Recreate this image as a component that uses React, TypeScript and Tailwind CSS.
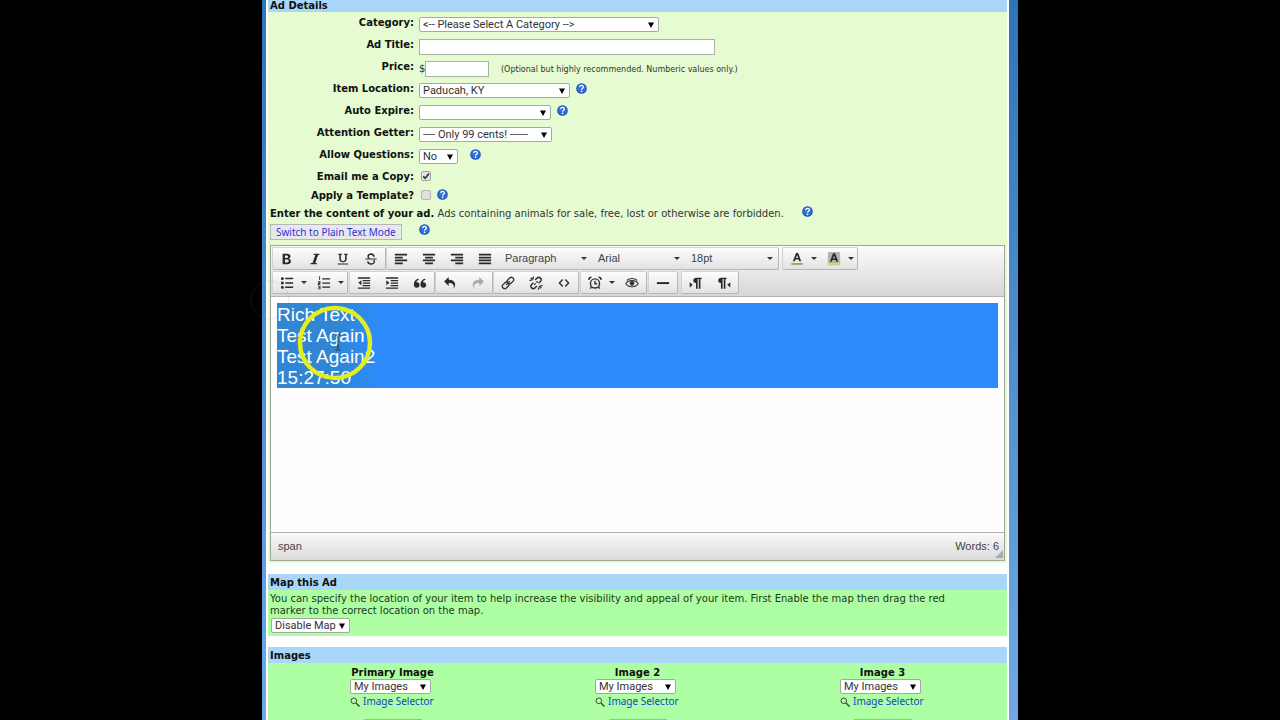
import React from "react";

const ui = "font-['Liberation_Sans',Arial,sans-serif]";

function Drop({ id, label, value, size }: { id: string; label: string; value: string; size: string }) {
  return (
    <span className={`grid h-[15px] shrink-0 items-center ${size}`}>
      <select
        id={id}
        aria-label={label}
        defaultValue={value}
        className="col-start-1 row-start-1 h-[15px] w-full appearance-none rounded-xs border border-[#a3ab9f] bg-white pl-[3px] font-[Roboto,Arial,sans-serif] text-[11px] leading-[13px] text-[#333]"
      >
        <option value={value}>{value}</option>
      </select>
      <svg viewBox="0 0 6 6" className="pointer-events-none col-start-1 row-start-1 mr-[5px] h-[6px] w-[6px] justify-self-end fill-black">
        <path d="M0 .5h6L3 6z" />
      </svg>
    </span>
  );
}

function Help({ label }: { label: string }) {
  return (
    <button type="button" aria-label={label} className="h-[11px] w-[11px] shrink-0">
      <svg viewBox="0 0 12 12" className="h-[11px] w-[11px]">
        <circle cx="6" cy="6" r="5.8" fill="#1d52b4" />
        <circle cx="6" cy="5.6" r="4.9" fill="#2f6fd6" />
        <path d="M4.1 4.5C4.1 2 8 2.100 8 4.300 8 5.700 6.100 5.600 6.100 7.300" fill="none" stroke="#fff" strokeWidth="1.4" />
        <circle cx="6.100" cy="9.200" r=".9" fill="#fff" />
      </svg>
    </button>
  );
}

function Row({ id, label, children, short = false }: { id: string; label: string; children: React.ReactNode; short?: boolean }) {
  return (
    <div className={`flex items-start ${short ? "h-[19px]" : "h-[22px]"}`}>
      <label htmlFor={id} className="w-[146px] shrink-0 pt-[3px] text-right font-bold leading-[13px]">
        {label}
      </label>
      <div className={`flex items-start pl-[5px] ${short ? "pt-[3px]" : "pt-1"}`}>{children}</div>
    </div>
  );
}

const icons: Record<string, React.ReactNode> = {
  bold: <path fillRule="evenodd" d="M3 2h5.500c4 0 4.500 4.500 1.600 5.700 3.700 1 3 6.300-1.300 6.300H3zm2.700 2v2.800h2c2 0 2-2.800 0-2.800zm0 4.700V12h2.400c2.500 0 2.500-3.300 0-3.300z" />,
  italic: <path d="M6.500 2h6.500v1.300h-1.500L8.300 12.700H10V14H3v-1.300h2.200L8.400 3.300H6.500z" />,
  underline: <path d="M2.500 2H7v1H5.600v5c0 3.200 4.800 3.200 4.800 0V3H9V2h4.500v1h-1.300v5.300c0 4.500-8.400 4.500-8.400 0V3H2.500zM2 13h12v1.400H2z" />,
  strike: <path d="M1.500 7.500h13v1.200h-13zM12.300 5.500h-1.700C10.300 2.500 5.500 2.800 5.500 5c0 1 .8 1.600 2 2H4.600C2.300 3.500 6 1.500 8 1.500c2.500 0 4.300 1.500 4.300 4zM3.500 10.500h1.700c.3 3.300 5.800 2.800 5.800.6 0-.8-.4-1.300-1-1.700h2.400c1.200 3-1.600 5.100-4.200 5.100-3 0-4.700-1.600-4.700-4z" />,
  left: <path d="M1 2h14v2H1zM1 5.300h9v2H1zM1 8.600h14v2H1zM1 11.900h9v2H1z" />,
  center: <path d="M1 2h14v2H1zM3.500 5.300h9v2h-9zM1 8.600h14v2H1zM3.500 11.900h9v2h-9z" />,
  right: <path d="M1 2h14v2H1zM6 5.300h9v2H6zM1 8.600h14v2H1zM6 11.900h9v2H6z" />,
  justify: <path d="M1 2h14v2H1zM1 5.300h14v2H1zM1 8.600h14v2H1zM1 11.900h14v2H1z" />,
  bullets: <path d="M6 2h9v1.800H6zM6 7h9v1.800H6zM6 12h9v1.800H6zM1 3a1.700 1.700 0 1 0 3.400 0A1.700 1.700 0 1 0 1 3zM1 8a1.700 1.700 0 1 0 3.400 0A1.700 1.700 0 1 0 1 8zM1 13a1.700 1.700 0 1 0 3.400 0A1.700 1.700 0 1 0 1 13z" />,
  numbers: <path d="M6 2.500h9V4H6zM6 7.300h9v1.500H6zM6 12h9v1.500H6zM2 .5h1.500v4h-1V1.500H2zM1 6h3v2.300l-1.800 1H4v1H1V8.200l1.800-1H1zM1 11.200h3v4H1v-1h2v-.7H1.500v-.8H3V12H1z" />,
  outdent: <path d="M1 1.500h14V3H1zM6.500 4.500H15V6H6.500zM6.500 7.300H15v1.500H6.500zM6.500 10.200H15v1.500H6.500zM1 13h14v1.500H1zM5 4.800v5.800L1.500 7.700z" />,
  indent: <path d="M1 1.500h14V3H1zM6.500 4.500H15V6H6.500zM6.500 7.300H15v1.500H6.500zM6.500 10.200H15v1.500H6.500zM1 13h14v1.500H1zM1.500 4.800v5.800L5 7.700z" />,
  quote: <path d="M4.500 7a3.200 3.200 0 1 1-3.400 3.500C.7 6 3.300 3.300 6.500 3v1.600C5 5 4 5.900 3.800 7zM12 7a3.200 3.200 0 1 1-3.400 3.500C8.200 6 10.800 3.300 14 3v1.600c-1.500.4-2.500 1.300-2.700 2.400z" />,
  undo: <path d="M6.500 1v3.200c7-.2 9.500 5.300 5.500 10.300C13.200 10.800 12 7.800 6.500 8v3.500L1.200 6.200z" />,
  redo: <path d="M9.500 1v3.200c-7-.2-9.500 5.300-5.500 10.300C2.800 10.800 4 7.800 9.500 8v3.500l5.300-5.300z" fill="#aaa" />,
  link: (
    <g fill="none" stroke="#333" strokeWidth="1.500" transform="rotate(-45 8 8)">
      <rect x="0" y="5.300" width="8.500" height="5.400" rx="2.700" />
      <rect x="7.500" y="5.300" width="8.500" height="5.400" rx="2.700" />
      <path d="M5 8h6" />
    </g>
  ),
  unlink: (
    <g fill="none" stroke="#333" strokeWidth="1.700">
      <path d="M7 4.500l2-2c3-2.500 6.500 1 4 3.800l-2 2M9 11.500l-2 2c-3 2.500-6.500-1-4-3.800l2-2M6 10l1.500-1.500M8.500 7.500L10 6M2 2l2.500 2.500M5 .5V3M.5 5H3M14 14l-2.500-2.500M11 15.500V13M15.500 11H13" />
    </g>
  ),
  code: <path d="M6.500 4L2.800 8l3.700 4M9.500 4l3.700 4-3.700 4" fill="none" stroke="#333" strokeWidth="1.700" />,
  clock: (
    <g fill="none" stroke="#333" strokeWidth="1.600">
      <circle cx="8" cy="8.500" r="5.200" />
      <path d="M8 5.500v3.300h2.500M1 4.500c0-2 1-3 3-3M15 4.500c0-2-1-3-3-3M4 12.500l-1.500 2M12 12.500l1.500 2" />
    </g>
  ),
  eye: (
    <g fill="none" stroke="#333" strokeWidth="1.200">
      <path d="M.8 8.500C4 4 12 4 15.200 8.500 12 13.500 4 13.500 .8 8.500zM2 5c3.500-3 8.500-3 12 0" />
      <circle cx="8" cy="8.300" r="2.100" fill="#333" />
    </g>
  ),
  rule: <path d="M1 7h14v2.200H1z" />,
  ltr: <path d="M14.500 2H8.300C3.800 2 3.800 8 8 8v6.500h1.900v-11h1.300v11h1.900v-11h1.400zM.8 7v6l3.500-3z" />,
  rtl: <path d="M11 2H4.800C.3 2 .3 8 4.500 8v6.500h1.900v-11h1.300v11h1.900v-11H11zM15.200 7v6l-3.500-3z" />,
  color: (
    <>
      <path fillRule="evenodd" d="M6.900 1h2.400l3.500 9.500h-2.200l-.7-2H6.200l-.7 2H3.300zm1.200 2.500L6.800 6.800h2.500z" />
      <path d="M1.500 12.800h13v1.700h-13z" fill="#8a9440" />
    </>
  ),
  back: (
    <>
      <path d="M1 0h14v13H1z" fill="#b3b6b3" />
      <path fillRule="evenodd" d="M6.900 1.500h2.400l3.500 9.500h-2.200l-.7-2H6.200l-.7 2H3.300zM8.100 4L6.800 7.300h2.500z" />
      <path d="M1 13h14v2.300H1z" fill="#d2d65c" />
    </>
  ),
};

function Caret() {
  return (
    <svg viewBox="0 0 6 3" className="h-[3px] w-[6px] shrink-0 fill-[#333]">
      <path d="M0 0h6L3 3z" />
    </svg>
  );
}

function Tool({ icon, name, menu = false }: { icon: string; name: string; menu?: boolean }) {
  return (
    <button type="button" aria-label={name} className={`flex h-[21px] items-center ${menu ? "w-[37px] justify-between pl-[7px] pr-[3px]" : "w-[28px] justify-center"}`}>
      <svg viewBox="0 0 16 16" className="h-[14px] w-[14px] fill-[#2a2a2a]">
        {icons[icon]}
      </svg>
      {menu && <Caret />}
    </button>
  );
}

function ListTool({ text }: { text: string }) {
  return (
    <button type="button" className="flex h-[21px] w-[93px] items-center justify-between pl-[6px] pr-[5px] text-[11px] text-[#444]">
      {text}
      <Caret />
    </button>
  );
}

const spaces = { none: "", near: "ml-px", wide: "ml-[3px]" };

function Group({ children, space = "none" }: { children: React.ReactNode; space?: keyof typeof spaces }) {
  return (
    <div className={`flex rounded-xs border border-[#d2d2d2] border-r-[#b8b8b8] border-b-[#b5b5b5] bg-linear-to-b from-[#fdfdfd] to-[#e2e2e2] ${spaces[space]}`}>
      {children}
    </div>
  );
}

function Heading({ children, slim = false }: { children: React.ReactNode; slim?: boolean }) {
  return <h2 className={`bg-[#a9d6f9] pl-[2px] font-bold ${slim ? "h-[12px] leading-[12px]" : "h-[16px] leading-[17px]"}`}>{children}</h2>;
}

function ImagePicker({ title, id }: { title: string; id: string }) {
  return (
    <div className="flex flex-1 flex-col items-center pt-[3px]">
      <label htmlFor={id} className="font-bold leading-[13px]">
        {title}
      </label>
      <div className="flex w-[85px] flex-col">
        <Drop id={id} label={title} value="My Images" size="w-[81px]" />
        <a href="#selector" className="flex items-center gap-[3px] whitespace-nowrap font-['Noto_Sans',sans-serif] text-[10px] leading-[15px] text-[#0a48c8]">
          <svg viewBox="0 0 10 10" className="h-[10px] w-[10px] shrink-0" fill="none" stroke="#444">
            <circle cx="3.800" cy="3.800" r="2.800" />
            <path d="M6 6l3.500 3.500" strokeWidth="1.500" />
          </svg>
          Image Selector
        </a>
        <button type="button" aria-label={`Upload ${title}`} className="mt-[10px] ml-[14px] h-[18px] w-[58px] border border-[#a9b5a9] bg-[#dedede]" />
      </div>
    </div>
  );
}

export default function App() {
  return (
    <div className="flex h-screen justify-center overflow-hidden bg-black font-['DejaVu_Sans',Verdana,sans-serif] text-[10px] text-[#111]">
      <div className="h-full w-[59.0625%] bg-linear-to-b from-[#2b76b8] to-[#70a8e6] pl-1 pr-[9px]">
        <main className="h-full bg-white px-[2px]">
          <form className="bg-[#e6fbd2] pb-[2px]" onSubmit={(e) => e.preventDefault()}>
            <Heading slim>Ad Details</Heading>
            <div className="pt-px">
              <Row id="category" label="Category:">
                <Drop id="category" label="Category" value="<-- Please Select A Category -->" size="w-[240px]" />
              </Row>
              <Row id="title" label="Ad Title:">
                <input id="title" type="text" className="h-[16px] w-[296px] border border-[#a9b3a4] bg-white px-1" />
              </Row>
              <Row id="price" label="Price:">
                <span className="w-[6px] text-[10px] leading-[16px] text-[#333]">$</span>
                <input id="price" type="text" className="h-[16px] w-[64px] border border-[#a9b3a4] bg-white px-1" />
                <span className="pl-3 text-[8px] leading-[18px] text-[#333]">(Optional but highly recommended. Numberic values only.)</span>
              </Row>
              <Row id="location" label="Item Location:">
                <Drop id="location" label="Item location" value="Paducah, KY" size="mr-[6px] w-[151px]" />
                <Help label="Item location help" />
              </Row>
              <Row id="expire" label="Auto Expire:">
                <Drop id="expire" label="Auto expire" value="" size="mr-[6px] w-[132px]" />
                <Help label="Auto expire help" />
              </Row>
              <Row id="attention" label="Attention Getter:">
                <Drop id="attention" label="Attention getter" value="---- Only 99 cents! ------" size="w-[133px]" />
              </Row>
              <Row id="questions" label="Allow Questions:">
                <Drop id="questions" label="Allow questions" value="No" size="mr-[12px] w-[39px]" />
                <Help label="Allow questions help" />
              </Row>
              <Row id="copy" label="Email me a Copy:" short>
                <span className="grid h-[11px] w-[13px] place-items-center">
                  <input id="copy" type="checkbox" defaultChecked className="peer col-start-1 row-start-1 h-[10px] w-[10px] appearance-none rounded-xs border border-[#a0a5a0] bg-[#e6e6e6]" />
                  <svg viewBox="0 0 10 10" className="pointer-events-none invisible col-start-1 row-start-1 h-[10px] w-[10px] peer-checked:visible">
                    <path d="M2.200 5.300l2 2L8 2.500" fill="none" stroke="#333" strokeWidth="1.700" />
                  </svg>
                </span>
              </Row>
              <Row id="template" label="Apply a Template?" short>
                <span className="mr-[5px] grid h-[11px] w-[13px] place-items-center">
                  <input id="template" type="checkbox" className="h-[10px] w-[10px] appearance-none rounded-xs border border-[#b0b5b0] bg-[#dedfde]" />
                </span>
                <Help label="Template help" />
              </Row>
            </div>
            <p className="flex h-[19px] items-start gap-[18px] whitespace-nowrap pt-px pl-[2px] text-[#333]">
              <span className="leading-[16px]">
                <b className="text-[#111]">Enter the content of your ad.</b> Ads containing animals for sale, free, lost or otherwise are forbidden.
              </span>
              <Help label="Ad content help" />
            </p>
            <div className="flex h-[21px] items-start gap-[17px] pl-[2px]">
              <button type="button" className="h-[16px] whitespace-nowrap border border-[#b3b8c0] bg-[#e8e8ec] px-[5px] font-['Noto_Sans',sans-serif] text-[10px] leading-[14px] text-[#3030d8]">
                Switch to Plain Text Mode
              </button>
              <Help label="Plain text mode help" />
            </div>

            <section className={`mr-[2px] ml-[2px] border border-[#9fa39c] ${ui}`}>
              <div className="flex flex-col gap-px border-b border-[#b5b5b5] bg-linear-to-b from-[#fcfcfc] to-[#d6d6d6] pt-px pb-[2px] pl-px">
                <div className="flex">
                  <Group>
                    <Tool icon="bold" name="Bold" />
                    <Tool icon="italic" name="Italic" />
                    <Tool icon="underline" name="Underline" />
                    <Tool icon="strike" name="Strikethrough" />
                  </Group>
                  <Group>
                    <Tool icon="left" name="Align left" />
                    <Tool icon="center" name="Align center" />
                    <Tool icon="right" name="Align right" />
                    <Tool icon="justify" name="Justify" />
                    <ListTool text="Paragraph" />
                    <ListTool text="Arial" />
                    <ListTool text="18pt" />
                  </Group>
                  <Group space="wide">
                    <Tool icon="color" name="Text color" menu />
                    <Tool icon="back" name="Background color" menu />
                  </Group>
                </div>
                <div className="flex">
                  <Group>
                    <Tool icon="bullets" name="Bullet list" menu />
                    <Tool icon="numbers" name="Numbered list" menu />
                  </Group>
                  <Group space="near">
                    <Tool icon="outdent" name="Decrease indent" />
                    <Tool icon="indent" name="Increase indent" />
                    <Tool icon="quote" name="Blockquote" />
                  </Group>
                  <Group>
                    <Tool icon="undo" name="Undo" />
                    <Tool icon="redo" name="Redo" />
                  </Group>
                  <Group>
                    <Tool icon="link" name="Insert link" />
                    <Tool icon="unlink" name="Remove link" />
                    <Tool icon="code" name="Source code" />
                  </Group>
                  <Group space="near">
                    <Tool icon="clock" name="Insert date" menu />
                    <Tool icon="eye" name="Preview" />
                  </Group>
                  <Group space="near">
                    <Tool icon="rule" name="Horizontal line" />
                  </Group>
                  <Group space="wide">
                    <Tool icon="ltr" name="Left to right" />
                    <Tool icon="rtl" name="Right to left" />
                  </Group>
                </div>
              </div>
              <div className="relative h-[235px] bg-[#fefefe] px-[6px] pt-[6px]">
                <div role="textbox" aria-label="Ad content" className="bg-linear-to-r from-[#3086d2] from-8% to-[#2e8bfb] to-14% pt-px text-[19px] leading-[21px] text-white">
                  <p>Rich Text</p>
                  <p>Test Again</p>
                  <p>Test Again2</p>
                  <p>15:27:50</p>
                </div>
                <svg viewBox="0 0 76 76" className="pointer-events-none absolute top-[8px] left-[26px] h-[76px] w-[76px]" fill="none">
                  <circle cx="38" cy="38" r="35" stroke="#e3ee1f" strokeWidth="4.500" />
                  <path d="M38.500 30h2M41.500 30h2M41 31v13M38.500 45h2M41.500 45h2" stroke="#222" />
                </svg>
                <svg viewBox="0 0 40 40" className="pointer-events-none absolute -top-[17px] -left-[21px] h-[40px] w-[40px]" fill="none">
                  <circle cx="20" cy="20" r="19" stroke="#6670a0" strokeOpacity=".16" />
                </svg>
              </div>
              <div className="flex h-[28px] items-center justify-between border-t border-[#b0b0b0] bg-linear-to-b from-[#fafafa] to-[#dadada] pl-[7px] text-[11px] text-[#444]">
                <span>span</span>
                <span className="flex h-full items-center pr-px">
                  Words: 6
                  <svg viewBox="0 0 8 8" className="mb-[2px] -ml-1 h-2 w-2 self-end fill-[#aaa]">
                    <path d="M8 0v8H0z" />
                  </svg>
                </span>
              </div>
            </section>
          </form>

          <section className="mt-[11px] h-[62px] bg-[#aefea3]">
            <Heading>Map this Ad</Heading>
            <p className="pt-[3px] pr-[30px] pl-[2px] leading-[12px] text-[#1c3a1c]">
              You can specify the location of your item to help increase the visibility and appeal of your item. First Enable the map then drag the red marker to the correct location on the map.
            </p>
            <div className="pt-px pl-[3px]">
              <Drop id="map" label="Map" value="Disable Map" size="w-[79px]" />
            </div>
          </section>

          <section className="mt-[11px] bg-[#aefea3]">
            <Heading>Images</Heading>
            <div className="flex px-[2px]">
              <ImagePicker title="Primary Image" id="image1" />
              <ImagePicker title="Image 2" id="image2" />
              <ImagePicker title="Image 3" id="image3" />
            </div>
          </section>
        </main>
      </div>
    </div>
  );
}
